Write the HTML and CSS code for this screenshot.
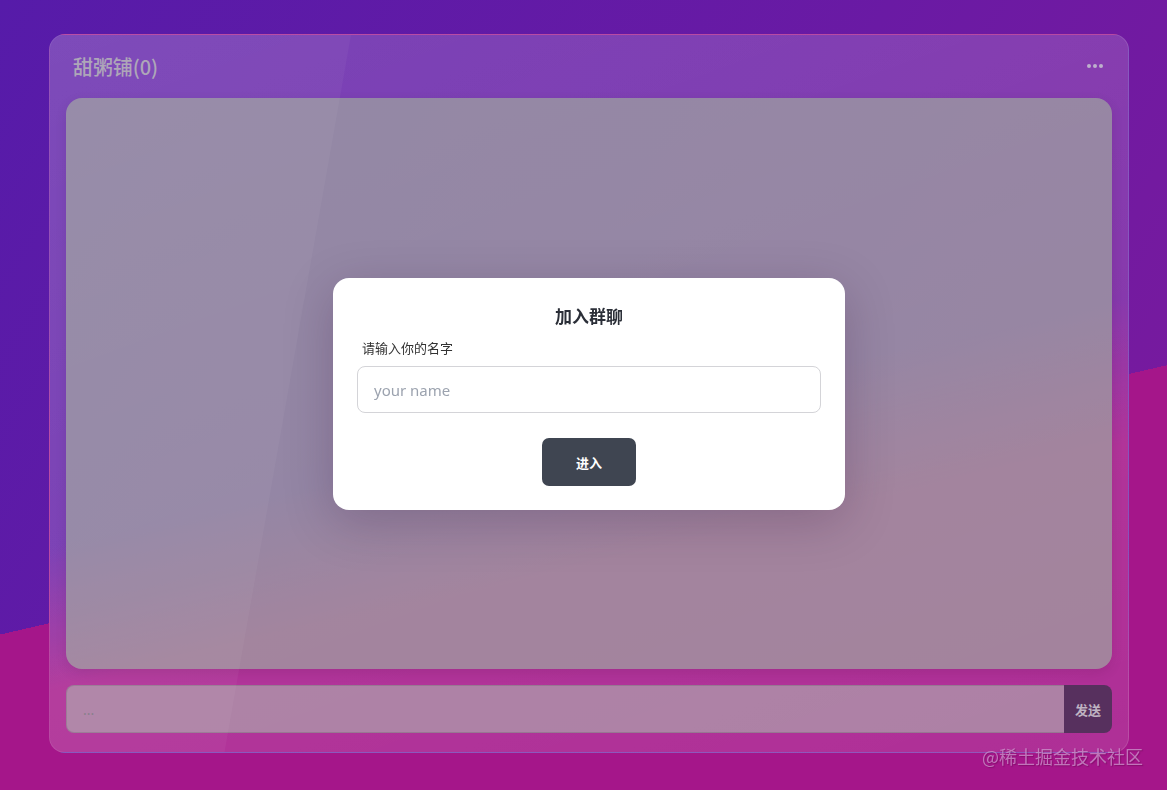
FILE: index.html
```html
<!DOCTYPE html>
<html lang="zh">
<head>
<meta charset="utf-8">
<link rel="stylesheet" href="styles.css">
</head>
<body>
<div class="page">
  <div class="room">
    <div class="gloss"></div>
    <div class="room-head">
      <div class="room-title">甜粥铺(0)</div>
      <div class="more"><span></span><span></span><span></span></div>
    </div>
    <div class="messages"></div>
    <div class="composer">
      <input class="composer-input" type="text" placeholder="...">
      <button class="send">发送</button>
    </div>
  </div>
</div>
<div class="overlay">
  <div class="dialog">
    <div class="dialog-title">加入群聊</div>
    <label class="dialog-label">请输入你的名字</label>
    <input class="name-input" type="text" placeholder="your name">
    <div class="dialog-actions"><button class="enter">进入</button></div>
  </div>
</div>
<div class="watermark">@稀土掘金技术社区</div>
</body>
</html>
```
FILE: styles.css
```css
html, body {
  margin: 0;
  padding: 0;
  height: 100%;
}
body {
  font-family: "Noto Sans CJK SC", "Noto Sans", sans-serif;
  background:
    linear-gradient(167deg, transparent 59.9%, #a5168a 59.9%),
    linear-gradient(120deg, #561ba9 0%, #6a1aa4 55%, #7c1a9c 100%);
  overflow: hidden;
  position: relative;
}
.page {
  padding: 34px 0 0 49px;
}
.room {
  position: relative;
  width: 1080px;
  height: 719px;
  box-sizing: border-box;
  padding: 0 16px 19px;
  display: flex;
  flex-direction: column;
  border-radius: 16px;
  background:
    linear-gradient(160deg, rgba(255,255,255,0.18), rgba(255,255,255,0.11)),
    linear-gradient(167deg, rgba(165,22,138,0) 53%, #a5168a 68%),
    linear-gradient(120deg, #5a1ba8 0%, #6a1aa4 55%, #7a1a9d 100%);
  border: 1px solid rgba(255,255,255,0.12);
  overflow: hidden;
}
.gloss {
  position: absolute;
  top: 0;
  left: -300px;
  width: 601px;
  height: 100%;
  transform-origin: top left;
  transform: skewX(-10deg);
  background: rgba(255,255,255,0.04);
  pointer-events: none;
  z-index: 2;
}
.room-head {
  height: 63px;
  display: flex;
  align-items: center;
  justify-content: space-between;
  padding: 0 9px 0 7px;
}
.room-title {
  font-size: 20px;
  font-weight: 500;
  color: #aba3b6;
  letter-spacing: -0.1px;
}
.more {
  display: flex;
  gap: 2px;
}
.more span {
  width: 4px;
  height: 4px;
  border-radius: 50%;
  background: #bdb0cc;
}
.messages {
  height: 572px;
  border-radius: 16px;
  background: rgba(158,164,160,0.72);
  box-shadow: 0 4px 12px rgba(60,0,50,0.12);
}
.composer {
  margin-top: 16px;
  height: 48px;
  display: flex;
}
.composer-input {
  flex: 1;
  box-sizing: border-box;
  height: 48px;
  border: 1px solid rgba(110,100,110,0.35);
  border-right: none;
  border-radius: 8px 0 0 8px;
  background: rgba(172,168,172,0.68);
  padding: 0 16px;
  font-size: 14px;
  outline: none;
  font-family: "Noto Sans", sans-serif;
}
.composer-input::placeholder {
  color: #857a88;
}
.send {
  width: 48px;
  height: 48px;
  border: none;
  border-radius: 0 8px 8px 0;
  background: #57305e;
  color: #bfb3c2;
  font-size: 13px;
  font-weight: 700;
  font-family: "Noto Sans CJK SC", sans-serif;
  padding: 0;
}
.overlay {
  position: fixed;
  inset: 0;
  display: flex;
  align-items: center;
  justify-content: center;
  padding: 0 0 2px 11px;
  z-index: 5;
}
.dialog {
  width: 512px;
  box-sizing: border-box;
  padding: 26px 24px 24px;
  background: #fff;
  border-radius: 16px;
  box-shadow: 0 12px 50px rgba(40,10,50,0.22);
  display: flex;
  flex-direction: column;
}
.dialog-title {
  text-align: center;
  font-size: 17px;
  line-height: 24px;
  font-weight: 700;
  color: #2b2f38;
}
.dialog-label {
  margin-top: 10px;
  padding-left: 5px;
  font-size: 13px;
  line-height: 20px;
  color: #333;
}
.name-input {
  margin-top: 8px;
  height: 47px;
  box-sizing: border-box;
  border: 1px solid #d4d4d8;
  border-radius: 8px;
  padding: 0 16px;
  font-size: 15px;
  font-family: "Noto Sans", sans-serif;
  outline: none;
}
.name-input::placeholder {
  color: #9ca3af;
}
.dialog-actions {
  margin-top: 25px;
  display: flex;
  justify-content: center;
}
.enter {
  width: 94px;
  height: 48px;
  border: none;
  border-radius: 7px;
  background: #3f4551;
  color: #fff;
  font-size: 13px;
  font-weight: 700;
  font-family: "Noto Sans CJK SC", sans-serif;
}
.watermark {
  position: absolute;
  right: 24px;
  bottom: 22px;
  font-size: 18px;
  line-height: 24px;
  color: rgba(205,150,205,0.75);
  text-shadow: 1px 1px 1px rgba(80,0,60,0.35);
  z-index: 6;
}
```
